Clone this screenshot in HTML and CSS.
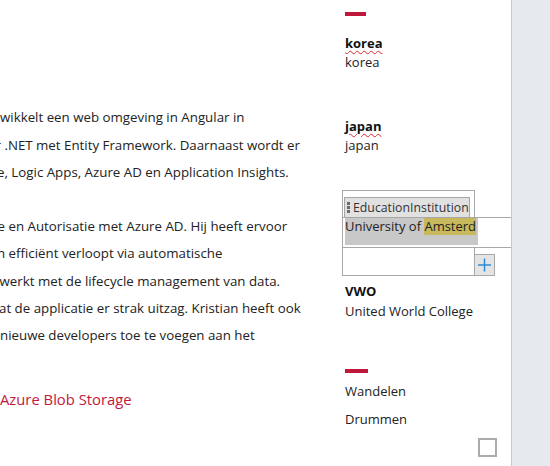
FILE: index.html
```html
<!DOCTYPE html>
<html lang="nl">
<head>
<meta charset="utf-8">
<title>Document</title>
<link rel="stylesheet" href="styles.css">
</head>
<body>
<div class="page">
  <main class="doc">
    <div class="body-text">
      <div class="ln">wikkelt een web omgeving in Angular in</div>
      <div class="ln shift-r">r .NET met Entity Framework. Daarnaast wordt er</div>
      <div class="ln shift-e">e, Logic Apps, Azure AD en Application Insights.</div>
      <div class="ln"></div>
      <div class="ln shift-e2">e en Autorisatie met Azure AD. Hij heeft ervoor</div>
      <div class="ln shift-n">n efficiënt verloopt via automatische</div>
      <div class="ln shift-w">werkt met de lifecycle management van data.</div>
      <div class="ln shift-a">at de applicatie er strak uitzag. Kristian heeft ook</div>
      <div class="ln">nieuwe developers toe te voegen aan het</div>
    </div>
    <h2 class="tech">Azure Blob Storage</h2>
  </main>

  <aside class="side">
    <div class="bar bar-top"></div>
    <div class="entry entry-korea">
      <div class="label"><span class="spell">korea</span></div>
      <div class="value">korea</div>
    </div>
    <div class="entry entry-japan">
      <div class="label"><span class="spell">japan</span></div>
      <div class="value">japan</div>
    </div>

    <div class="cc">
      <div class="cc-head">
        <div class="cc-tag"><span class="grip"><i></i><i></i><i></i></span>EducationInstitution</div>
      </div>
      <div class="cc-row">
        <div class="cc-text">University of <mark class="hl">Amsterd</mark></div>
      </div>
      <div class="cc-foot">
        <div class="cc-empty"></div>
        <div class="cc-add">
          <svg width="19" height="20" viewBox="0 0 19 20" aria-hidden="true">
            <path d="M9.5 3.5v13M3 10h13" stroke="#2e8ad6" stroke-width="1.5" fill="none"/>
          </svg>
        </div>
      </div>
    </div>

    <div class="entry entry-vwo">
      <div class="label">VWO</div>
      <div class="value">United World College</div>
    </div>

    <div class="bar bar-hobby"></div>
    <div class="hobby hobby-first">Wandelen</div>
    <div class="hobby hobby-next">Drummen</div>
    <div class="check-row"><span class="checkbox"></span></div>
  </aside>

  <div class="divider"></div>
  <div class="pane"></div>
</div>
</body>
</html>
```

FILE: styles.css
```css
* { box-sizing: border-box; }

html, body {
  margin: 0;
  padding: 0;
  background: #ffffff;
}

body {
  font-family: "Open Sans", "Noto Sans", "Liberation Sans", sans-serif;
  font-size: 13px;
  color: #222222;
  overflow: hidden;
}

.page {
  display: flex;
  width: 550px;
  height: 466px;
  overflow: hidden;
}

/* ---------- left document text ---------- */
.doc {
  width: 342px;
  flex: none;
  overflow: hidden;
  padding-top: 104.4px;
  font-size: 13.3px;
}

.ln {
  height: 27.2px;
  line-height: 27.2px;
  white-space: nowrap;
}

.shift-r { margin-left: -4.5px; }
.shift-e { margin-left: -3px; }
.shift-e2 { margin-left: -2.5px; }
.shift-n { margin-left: -3px; }
.shift-w { margin-left: -0.5px; }
.shift-a { margin-left: -1px; }

.tech {
  margin: 37.6px 0 0 0;
  font-size: 14.8px;
  line-height: 24px;
  font-weight: 400;
  color: #c0183c;
  white-space: nowrap;
}

/* ---------- right column ---------- */
.side {
  width: 169px;
  flex: none;
  display: flex;
  flex-direction: column;
  align-items: flex-start;
}

.bar {
  height: 4px;
  background: #c0183c;
  margin-left: 3px;
}
.bar-top { margin-top: 12px; width: 21px; }
.bar-hobby { margin-top: 48px; width: 23px; }

.entry {
  margin-left: 3px;
  line-height: 19.5px;
}
.entry-korea { margin-top: 17.5px; }
.entry-japan { margin-top: 44px; }
.entry-vwo { margin-top: 6px; }

.label { font-weight: 700; color: #111111; }
.value { color: #222222; }

.spell {
  text-decoration: underline wavy #e0242a;
  text-decoration-thickness: 1px;
  text-underline-offset: 2px;
}

/* content control */
.cc {
  margin-top: 34.5px;
  width: 169px;
  display: flex;
  flex-direction: column;
}

.cc-head {
  width: 133px;
  height: 27px;
  border: 1px solid #a8a8a8;
  border-bottom: none;
  padding: 6px 0 0 1px;
}

.cc-tag {
  width: 126px;
  height: 20px;
  background: #e1e1e1;
  border: 1px solid #a6a6a6;
  border-bottom: none;
  display: flex;
  align-items: center;
  font-size: 12.3px;
  line-height: 18px;
  color: #333333;
  white-space: nowrap;
  overflow: hidden;
}

.grip {
  display: flex;
  flex-direction: column;
  gap: 1px;
  margin: 0 3px 0 2px;
}
.grip i {
  display: block;
  width: 3px;
  height: 3px;
  background: #6a6a6a;
}

.cc-row {
  width: 169px;
  height: 31px;
  border-top: 1px solid #a8a8a8;
  border-bottom: 1px solid #a8a8a8;
  border-left: 1px solid #a8a8a8;
  padding-left: 2px;
}

.cc-text {
  width: 133px;
  height: 27px;
  background: #c8c8c8;
  line-height: 17px;
  white-space: nowrap;
  overflow: hidden;
  color: #222222;
}

.hl {
  background: #c7b95c;
  color: #222222;
}

.cc-foot {
  display: flex;
  align-items: flex-end;
}

.cc-empty {
  width: 133px;
  height: 28px;
  border: 1px solid #a8a8a8;
  border-top: none;
}

.cc-add {
  width: 21px;
  height: 22px;
  margin-left: -1px;
  border: 1px solid #a8a8a8;
  background: #e4e4e4;
  display: flex;
  align-items: center;
  justify-content: center;
}

.hobby {
  margin-left: 3px;
  line-height: 19.5px;
}
.hobby-first { margin-top: 9px; }
.hobby-next { margin-top: 8.5px; }

.check-row {
  margin-top: 8.5px;
  margin-left: 136px;
}

.checkbox {
  display: block;
  width: 19px;
  height: 19px;
  border: 2px solid #ababab;
  background: #ffffff;
}

/* ---------- side pane ---------- */
.divider {
  width: 1px;
  flex: none;
  background: #c8c8c8;
}

.pane {
  flex: 1;
  background: #e6e9ee;
}
```
